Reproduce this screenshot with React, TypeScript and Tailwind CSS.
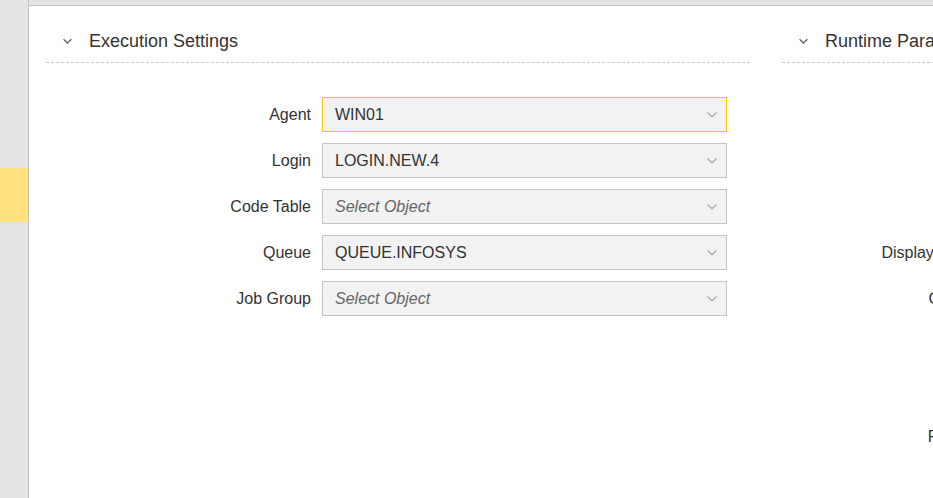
import React from "react";

const Chevron = ({ className }: { className?: string }) => (
  <svg viewBox="0 0 12 8" className={className} fill="none" stroke="currentColor" strokeWidth="1.5">
    <path d="M1.5 1.5 L6 5.8 L10.5 1.5" />
  </svg>
);

type Row = { label: string; value?: string; placeholder?: string; focused?: boolean };

const rows: Row[] = [
  { label: "Agent", value: "WIN01", focused: true },
  { label: "Login", value: "LOGIN.NEW.4" },
  { label: "Code Table", placeholder: "Select Object" },
  { label: "Queue", value: "QUEUE.INFOSYS" },
  { label: "Job Group", placeholder: "Select Object" },
];

const rightRows = ["", "", "", "Display Name", "Groups", "", "", "Results"];

function Select({ row }: { row: Row }) {
  const cls = row.focused
    ? "flex h-[35px] w-[405px] items-center justify-between border border-solid border-[#f5c800] bg-[#f2f2f2] pl-[12px] pr-[8px]"
    : "flex h-[35px] w-[405px] items-center justify-between border border-solid border-[#c4c4c4] bg-[#f2f2f2] pl-[12px] pr-[8px]";
  return (
    <div className={cls}>
      {row.value ? (
        <span className="text-[16px] text-[#333333]">{row.value}</span>
      ) : (
        <span className="text-[16px] italic text-[#666666]">{row.placeholder}</span>
      )}
      <Chevron className="h-[8px] w-[12px] text-[#b0b0b0]" />
    </div>
  );
}

function Header({ title }: { title: string }) {
  return (
    <div className="flex h-[57px] items-center border-b border-dashed border-[#c8c8c8] pl-[16px] pt-[14px]">
      <Chevron className="mr-[16px] h-[7px] w-[11px] text-[#666666]" />
      <span className="whitespace-nowrap text-[18px] text-[#333333]">{title}</span>
    </div>
  );
}

export default function App() {
  return (
    <div
      className="flex h-[498px] w-[933px] overflow-hidden bg-white"
      style={{ fontFamily: "'Liberation Sans', Arial, sans-serif" }}
    >
      <div className="flex h-full w-[29px] shrink-0 flex-col border-r border-[#c0c0c0] bg-[#e4e4e4]">
        <div className="h-[168px]" />
        <div className="h-[54px] bg-[#ffe380]" />
      </div>
      <div className="flex min-w-0 flex-1 flex-col">
        <div className="h-[6px] shrink-0 border-b border-[#c4c4c4] bg-[#e4e4e4]" />
        <div className="flex gap-[32px] pl-[17px]">
          <div className="w-[704px] shrink-0">
            <Header title="Execution Settings" />
            <div className="mt-[34px] flex flex-col gap-[11px]">
              {rows.map((r) => (
                <div key={r.label} className="flex items-center">
                  <div className="w-[276px] shrink-0 pr-[11px] text-right text-[16px] text-[#333333]">{r.label}</div>
                  <Select row={r} />
                </div>
              ))}
            </div>
          </div>
          <div className="w-[704px] shrink-0">
            <Header title="Runtime Parameters" />
            <div className="mt-[34px] flex flex-col gap-[11px]">
              {rightRows.map((l, i) => (
                <div key={i} className="flex h-[35px] items-center">
                  <div className="w-[199px] shrink-0 whitespace-nowrap text-right text-[16px] text-[#333333]">{l}</div>
                </div>
              ))}
            </div>
          </div>
        </div>
      </div>
    </div>
  );
}
